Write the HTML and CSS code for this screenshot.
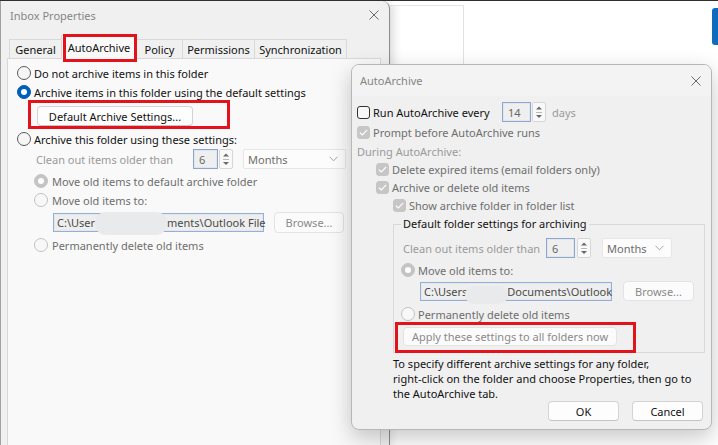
FILE: index.html
```html
<!DOCTYPE html>
<html>
<head>
<meta charset="utf-8">
<link rel="stylesheet" href="styles.css">
</head>
<body>
<div class="topline"></div>
<div class="behind"></div>
<div class="bluetab"></div>

<div class="win inbox">
  <div class="titlebar tb-inbox">
    <span class="title">Inbox Properties</span>
    <svg class="xicon" width="10" height="10" viewBox="0 0 10 10"><path d="M0.5 0.5L9.5 9.5M9.5 0.5L0.5 9.5"/></svg>
  </div>
  <div class="tabs">
    <div class="tab t-general">General</div>
    <div class="tab sel t-auto">AutoArchive<span class="redbox rb-tab"></span></div>
    <div class="tab t-policy">Policy</div>
    <div class="tab t-perm">Permissions</div>
    <div class="tab t-sync">Synchronization</div>
  </div>
  <div class="panel">
    <div class="row r1"><span class="radio"></span><span>Do not archive items in this folder</span></div>
    <div class="row r2"><span class="radio on"></span><span>Archive items in this folder using the default settings</span></div>
    <div class="btnrow"><div class="hlwrap"><div class="btn b-das">Default Archive Settings...</div><span class="redbox rb-das"></span></div></div>
    <div class="row r3"><span class="radio"></span><span>Archive this folder using these settings:</span></div>
    <div class="ctlrow l-clean">
      <span class="lbl-static l-clean-lbl">Clean out items older than</span>
      <div class="spin l-spin">6</div>
      <svg class="arrows l-arrows" width="14" height="20" viewBox="0 0 14 20"><rect x="0.5" y="0.5" width="13" height="19" rx="1.5"/><path class="tri" d="M4 7.5L7 4.5L10 7.5Z"/><path class="sep" d="M4 10.5H10"/><path class="tri" d="M4 13L7 16L10 13Z"/></svg>
      <div class="combo l-combo"><span>Months</span><svg width="9" height="6" viewBox="0 0 9 6"><path d="M0.5 0.8L4.5 4.8L8.5 0.8"/></svg></div>
    </div>
    <div class="row ind r-movedef"><span class="radio dis on"></span><span class="lbl-dis">Move old items to default archive folder</span></div>
    <div class="row ind r-moveto"><span class="radio dis"></span><span class="lbl-dis">Move old items to:</span></div>
    <div class="ctlrow l-path">
      <div class="path l-pathbox"><span>C:\User</span><span class="gap l-gap"></span><span>ments\Outlook File</span><span class="blob l-blob"></span></div>
      <div class="btn dis l-browse">Browse...</div>
    </div>
    <div class="row ind r-perm"><span class="radio dis"></span><span class="lbl-dis">Permanently delete old items</span></div>
  </div>
</div>

<div class="win aa">
  <div class="titlebar tb-aa">
    <span class="title">AutoArchive</span>
    <svg class="xicon" width="10" height="10" viewBox="0 0 10 10"><path d="M0.5 0.5L9.5 9.5M9.5 0.5L0.5 9.5"/></svg>
  </div>
  <div class="aabody">
    <div class="ctlrow a-run">
      <span class="check"></span>
      <span class="a-run-lbl">Run AutoArchive every</span>
      <div class="spin a-spin">14</div>
      <svg class="arrows a-arrows" width="14" height="20" viewBox="0 0 14 20"><rect x="0.5" y="0.5" width="13" height="19" rx="1.5"/><path class="tri" d="M4 7.5L7 4.5L10 7.5Z"/><path class="sep" d="M4 10.5H10"/><path class="tri" d="M4 13L7 16L10 13Z"/></svg>
      <span class="lbl-static a-days">days</span>
    </div>
    <div class="row a-prompt"><span class="check dis on"><svg width="9" height="7" viewBox="0 0 9 7"><path d="M0.8 3.6L3.3 6L8.2 0.9"/></svg></span><span class="lbl-dis">Prompt before AutoArchive runs</span></div>
    <div class="row a-during"><span class="lbl-static">During AutoArchive:</span></div>
    <div class="row a-ind1"><span class="check dis on"><svg width="9" height="7" viewBox="0 0 9 7"><path d="M0.8 3.6L3.3 6L8.2 0.9"/></svg></span><span class="lbl-dis">Delete expired items (email folders only)</span></div>
    <div class="row a-ind1"><span class="check dis on"><svg width="9" height="7" viewBox="0 0 9 7"><path d="M0.8 3.6L3.3 6L8.2 0.9"/></svg></span><span class="lbl-dis">Archive or delete old items</span></div>
    <div class="row a-ind2"><span class="check dis on"><svg width="9" height="7" viewBox="0 0 9 7"><path d="M0.8 3.6L3.3 6L8.2 0.9"/></svg></span><span class="lbl-dis">Show archive folder in folder list</span></div>
    <fieldset class="group">
      <legend>Default folder settings for archiving</legend>
      <div class="ctlrow g-clean">
        <span class="lbl-static g-clean-lbl">Clean out items older than</span>
        <div class="spin g-spin">6</div>
        <svg class="arrows g-arrows" width="14" height="20" viewBox="0 0 14 20"><rect x="0.5" y="0.5" width="13" height="19" rx="1.5"/><path class="tri" d="M4 7.5L7 4.5L10 7.5Z"/><path class="sep" d="M4 10.5H10"/><path class="tri" d="M4 13L7 16L10 13Z"/></svg>
        <div class="combo g-combo"><span>Months</span><svg width="9" height="6" viewBox="0 0 9 6"><path d="M0.5 0.8L4.5 4.8L8.5 0.8"/></svg></div>
      </div>
      <div class="row g-move"><span class="radio dis on"></span><span class="lbl-dis">Move old items to:</span></div>
      <div class="ctlrow g-path">
        <div class="path g-pathbox"><span>C:\Users</span><span class="gap g-gap"></span><span>Documents\Outlook</span><span class="blob g-blob"></span></div>
        <div class="btn dis g-browse">Browse...</div>
      </div>
      <div class="row g-perm"><span class="radio dis"></span><span class="lbl-dis">Permanently delete old items</span></div>
      <div class="applyrow"><div class="hlwrap"><div class="btn dis b-apply">Apply these settings to all folders now</div><span class="redbox rb-apply"></span></div></div>
    </fieldset>
    <p class="note">To specify different archive settings for any folder,<br>right-click on the folder and choose Properties, then go to the AutoArchive tab.</p>
    <div class="okrow">
      <div class="btn b-ok">OK</div>
      <div class="btn b-ok">Cancel</div>
    </div>
  </div>
</div>
</body>
</html>
```

FILE: styles.css
```css
* { box-sizing: border-box; }
html, body { margin: 0; padding: 0; }
body {
  width: 718px; height: 445px; overflow: hidden; position: relative;
  background: #ffffff;
  font-family: "Noto Sans", "Segoe UI", sans-serif;
  font-size: 11px; color: #111111;
}
.topline { position: absolute; left: 0; top: 0; width: 718px; height: 1px; background: #2f2f2f; z-index: 10; }
.behind {
  position: absolute; left: 388px; top: 5px; width: 76px; height: 70px;
  border-top: 1px solid #e4e4e4; border-right: 1px solid #e2e2e2;
  background: linear-gradient(90deg, #ececec, #ffffff 14px);
}
.bluetab { position: absolute; left: 712px; top: 8px; width: 10px; height: 37px; background: #0f6cbd; border-radius: 3px; }

.win { position: absolute; background: #f0f0f0; }
.inbox {
  left: 0; top: 1px; width: 390px; height: 470px;
  border-left: 1px solid #a0a0a0; border-right: 1px solid #8c8c8c;
  border-top-right-radius: 8px;
  box-shadow: 0 0 10px rgba(0,0,0,0.12);
}
.titlebar { display: flex; align-items: center; justify-content: space-between; }
.tb-inbox { height: 28px; padding: 0 10px 0 9px; }
.title { color: #858585; }
.xicon path { stroke: #6b6b6b; stroke-width: 1; fill: none; }

.tabs { height: 29px; display: flex; align-items: flex-end; padding-left: 8px; position: relative; z-index: 2; }
.tab {
  height: 19px; display: flex; align-items: center; justify-content: center;
  border: 1px solid #d9d9d9; border-bottom: 0; margin-right: -1px;
  background: #f0f0f0; color: #111111; position: relative;
}
.tab.sel { height: 24px; margin-bottom: -1px; background: #f9f9f9; align-items: flex-start; padding-top: 4px; z-index: 3; }
.t-general { width: 53px; }
.t-auto { width: 76px; }
.t-policy { width: 47px; }
.t-perm { width: 73px; }
.t-sync { width: 93px; }

.redbox { position: absolute; border: 3px solid #e3131b; pointer-events: none; z-index: 5; }
.rb-tab { left: 1px; right: -1px; top: -2px; bottom: -3px; }

.panel {
  margin-left: 6px; width: 374px; height: 400px;
  background: #f9f9f9; border: 1px solid #d8d8d8;
  padding: 5px 0 0 9px;
}
.row { height: 18px; display: flex; align-items: center; white-space: nowrap; }
.ctlrow { display: flex; align-items: center; white-space: nowrap; }
.r2 { margin-top: 1px; }
.btnrow { margin-top: 5px; height: 20px; display: flex; }
.r3 { margin-top: 4px; }
.ind { padding-left: 17px; }
.r-movedef { margin-top: 3px; }
.r-moveto { margin-top: 1px; }
.r-perm { margin-top: 3px; }

.radio {
  width: 14px; height: 14px; border-radius: 50%; flex: none;
  border: 1px solid #5a5a5a; background: #f6f6f6; margin-right: 3px; position: relative;
}
.radio.on { background: #005fb8; border-color: #005fb8; }
.radio.on::after {
  content: ""; position: absolute; left: 3px; top: 3px; width: 6px; height: 6px;
  border-radius: 50%; background: #ffffff;
}
.radio.dis { border-color: #c2c2c2; background: #f8f8f8; }
.radio.dis.on { background: #c4c4c4; border-color: #c4c4c4; }
.row.ind .radio { margin-right: 4px; }

.check {
  width: 13px; height: 13px; border-radius: 3px; flex: none;
  border: 1px solid #333333; background: #f8f8f8; margin-right: 3px;
  display: flex; align-items: center; justify-content: center;
}
.check.dis.on { background: #c6c6c6; border-color: #c6c6c6; }
.check svg path { stroke: #ffffff; stroke-width: 1.2; fill: none; }

.lbl-dis { color: #6e6e6e; }
.lbl-static { color: #9a9a9a; }

.btn {
  height: 20px; display: flex; align-items: center; justify-content: center;
  background: #fdfdfd; border: 1px solid #d3d3d3; border-bottom-color: #c4c4c4;
  border-radius: 4px; color: #111111; white-space: nowrap;
}
.btn.dis { background: #fbfbfb; border-color: #e3e3e3; color: #8a8a8a; }
.hlwrap { position: relative; display: flex; }
.b-das { margin-left: 20px; width: 156px; }
.rb-das { left: 11px; top: -6px; width: 202px; height: 29px; }

.l-clean { margin-top: 1px; height: 20px; }
.l-clean-lbl { margin-left: 19px; width: 157px; }
.spin {
  height: 20px; border: 1px solid #8ea6cc; background: #efefef;
  box-shadow: inset 0 0 0 1px #dfe6f1;
  color: #666666; padding-left: 5px; display: flex; align-items: center;
}
.l-spin { width: 25px; }
.arrows { flex: none; }
.arrows rect { fill: #f9f9f9; stroke: #d6d6d6; }
.arrows .tri { fill: #6a6a6a; }
.arrows .sep { stroke: #b8b8b8; stroke-width: 1; }
.l-arrows { margin-left: 1px; }
.combo {
  height: 20px; background: #fcfcfc; border: 1px solid #e6e6e6; border-radius: 2px;
  display: flex; align-items: center; justify-content: space-between;
  padding: 0 7px 0 4px; color: #6d6d6d;
}
.combo svg path { stroke: #a6a6a6; fill: none; stroke-width: 1; }
.l-combo { margin-left: 10px; width: 103px; }

.l-path { margin-top: 3px; height: 21px; }
.path {
  height: 19px; border: 1px solid #96afd3; background: #eeeeee;
  box-shadow: inset 0 0 0 1px #e2e8f1;
  color: #4a4a4a; padding-left: 3px; display: flex; align-items: center;
  white-space: nowrap; position: relative;
}
.gap { flex: none; display: inline-block; }
.blob { position: absolute; background: #e8eaec; border-radius: 11px; }
.l-pathbox { margin-left: 36px; width: 211px; }
.l-gap { width: 72px; }
.l-blob { left: 41px; top: -2px; width: 72px; height: 23px; }
.l-browse { margin-left: 10px; width: 70px; height: 21px; }

/* AutoArchive dialog */
.aa {
  left: 351px; top: 64px; width: 361px; height: 366px;
  border: 1px solid #b7b7b7; border-radius: 8px; overflow: hidden;
  box-shadow: 0 8px 22px rgba(0,0,0,0.22);
  z-index: 6;
}
.tb-aa { height: 31px; padding: 0 10px 0 8px; background: #f3f3f3; }
.aabody { padding: 0 7px 0 5px; }
.a-run { margin-top: 6px; height: 20px; }
.a-run .check { margin-right: 3px; }
.a-run-lbl { width: 129px; }
.a-spin { width: 29px; }
.a-arrows { margin-left: 1px; }
.a-days { margin-left: 6px; }
.a-prompt { margin-top: 1px; }
.a-during { margin-top: 1px; }
.a-ind1 { padding-left: 19px; }
.a-ind2 { padding-left: 36px; }

.group {
  margin: 1px 0 0 36px; width: 312px; min-width: 0;
  border: 1px solid #d9d9d9; padding: 0 8px 6px 7px;
}
.group legend { padding: 0 2px; line-height: 18px; color: #111111; margin-left: 0; }
.g-clean { margin-top: 5px; height: 20px; }
.g-clean-lbl { margin-left: 2px; width: 143px; }
.g-spin { width: 29px; }
.g-arrows { margin-left: 2px; }
.g-combo { margin-left: 11px; width: 70px; }
.g-move { margin-top: 3px; }
.g-path { margin-top: 2px; height: 20px; }
.g-pathbox { margin-left: 19px; width: 192px; }
.g-gap { width: 40px; }
.g-blob { left: 44px; top: 3px; width: 43px; height: 18px; }
.g-browse { margin-left: 11px; width: 71px; }
.g-perm { margin-top: 4px; }
.applyrow { margin-top: 4px; display: flex; }
.b-apply { margin-left: 2px; width: 214px; height: 19px; background: #f6f6f6; border-color: #e6e6e6; color: #9a9a9a; }
.rb-apply { left: -6px; top: -5px; width: 241px; height: 31px; }

.note { margin: 3px 0 0 36px; line-height: 15px; width: 300px; color: #111111; }
.okrow { margin-top: 0; display: flex; justify-content: flex-end; gap: 13px; padding-right: 1px; }
.b-ok { width: 71px; }
```
